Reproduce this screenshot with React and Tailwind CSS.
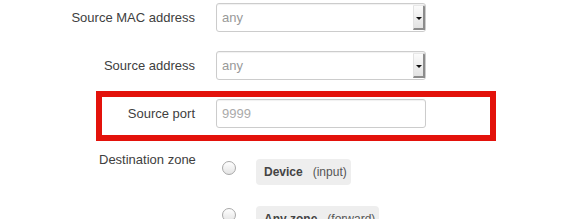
import React from 'react';

const SelectBox = ({ value }) => (
  <div className="flex h-[29px] w-[210px] rounded-[3px] border border-[#cccccc] bg-white shadow-[inset_0_1px_1px_rgba(0,0,0,0.06)]">
    <span className="flex-1 pl-[5px] leading-[27px] text-[13px] text-[#999999]">{value}</span>
    <div className="my-[1px] mr-0 flex w-[12px] items-center justify-center rounded-tr-[2px] border-r-[2px] border-b-[2px] border-l border-t border-r-[#8c8c8c] border-b-[#8c8c8c] border-l-[#e2e2e2] border-t-[#e8e8e8] bg-linear-to-b from-[#fbfbfb] to-[#e3e3e3]">
      <span className="mt-[2px] h-0 w-0 border-x-[3px] border-t-[3px] border-x-transparent border-t-[#111111]" />
    </div>
  </div>
);

const ZoneOption = ({ name, kind }) => (
  <div className="flex h-[47px] items-start">
    <span className="ml-[26px] mt-[2px] h-[14px] w-[14px] rounded-full border border-[#a8a8a8] bg-linear-to-b from-white to-[#e4e4e4]" />
    <span className="ml-[20px] flex h-[26px] items-center rounded-[4px] bg-[#eeeeee] pl-[8px] pr-[4px] text-[12px] text-[#555555]">
      <b className="font-bold text-[#444444]">{name}</b>
      <span className="ml-[10px]">{kind}</span>
    </span>
  </div>
);

export default function App() {
  return (
    <div
      className="h-[219px] w-[568px] overflow-hidden bg-white pt-[3px] text-[13px] text-[#404040]"
      style={{ fontFamily: '"Liberation Sans", Arial, sans-serif' }}
    >
      {/* Source MAC address */}
      <div className="flex items-center">
        <label className="w-[196px] pr-[1px] text-right">Source MAC address</label>
        <div className="ml-[20px]">
          <SelectBox value="any" />
        </div>
      </div>

      {/* Source address */}
      <div className="mt-[19px] flex items-center">
        <label className="w-[196px] pr-[1px] text-right">Source address</label>
        <div className="ml-[20px]">
          <SelectBox value="any" />
        </div>
      </div>

      {/* Source port, highlighted */}
      <div className="ml-[96px] mt-[11px] h-[50px] w-[400px] border-[6px] border-[#e3120b] pt-[2px]">
        <div className="flex items-center">
          <label className="w-[94px] pr-[1px] text-right">Source port</label>
          <input
            className="ml-[20px] h-[29px] w-[210px] rounded-[3px] border border-[#cccccc] bg-white pl-[5px] text-[13px] text-[#404040] outline-none shadow-[inset_0_1px_1px_rgba(0,0,0,0.06)] placeholder:text-[#aaaaaa]"
            placeholder="9999"
            readOnly
          />
        </div>
      </div>

      {/* Destination zone */}
      <div className="mt-[11px] flex">
        <label className="ml-[99px] w-[97px] leading-[15px]">Destination zone</label>
        <div className="flex flex-col pt-[7px]">
          <ZoneOption name="Device" kind="(input)" />
          <ZoneOption name="Any zone" kind="(forward)" />
        </div>
      </div>
    </div>
  );
}
